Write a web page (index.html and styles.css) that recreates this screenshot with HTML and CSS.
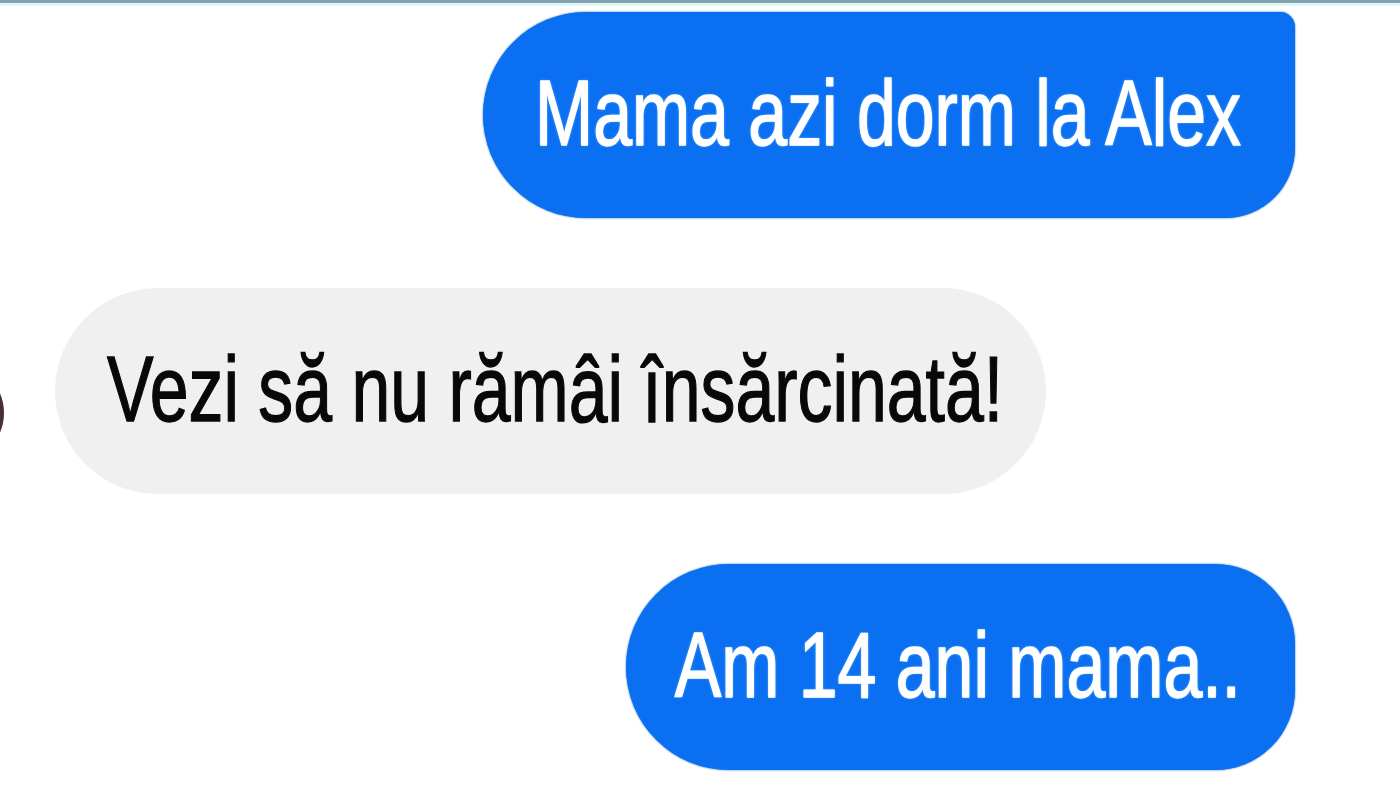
FILE: index.html
```html
<!DOCTYPE html>
<html lang="ro">
<head>
<meta charset="utf-8">
<title>Chat</title>
<link rel="stylesheet" href="styles.css">
</head>
<body>
<div class="chat">
  <div class="row row-out">
    <div class="bubble out first"><span class="txt">Mama azi dorm la Alex</span></div>
  </div>
  <div class="row row-in">
    <div class="avatar"></div>
    <div class="bubble in"><span class="txt">Vezi să nu rămâi însărcinată!</span></div>
  </div>
  <div class="row row-out">
    <div class="bubble out last"><span class="txt">Am 14 ani mama..</span></div>
  </div>
</div>
</body>
</html>
```

FILE: styles.css
```css
html, body {
  margin: 0;
  padding: 0;
  background: #ffffff;
  width: 1400px;
  height: 800px;
  overflow: hidden;
}

.chat {
  position: relative;
  height: 800px;
  box-sizing: border-box;
  border-top: 3px solid #86a0ad;
  padding: 9px 105px 0 55px;
  display: flex;
  flex-direction: column;
  gap: 70px;
  font-family: "Liberation Sans", Arial, sans-serif;
}

.chat::before {
  content: "";
  position: absolute;
  left: 0;
  right: 0;
  top: 0;
  height: 3px;
  background: #dcf7fb;
}

.row {
  display: flex;
}

.row-out {
  justify-content: flex-end;
}

.row-in {
  justify-content: flex-start;
}

.bubble {
  height: 206px;
  box-sizing: border-box;
  display: flex;
  align-items: center;
  padding: 0 54px 0 52px;
  font-size: 69.8px;
  line-height: 1;
  white-space: nowrap;
}

.txt {
  display: inline-block;
  transform: scaleY(1.32);
  transform-origin: 50% 50%;
  -webkit-text-stroke: 1px currentColor;
}

.out {
  background: #0b6ff2;
  color: #ffffff;
  text-shadow: 0 0 2px #b6f4ff;
  box-shadow: 0 0 2px #0a5fc8;
}

.out.first {
  border-radius: 103px 15px 70px 103px;
}

.out.last {
  border-radius: 103px 80px 80px 103px;
  padding-left: 49px;
}

.in {
  background: #f0f0f0;
  color: #080808;
  border-radius: 103px;
  padding-right: 43px;
}

.avatar {
  position: absolute;
  left: -96px;
  top: 360px;
  width: 100px;
  height: 100px;
  border-radius: 50%;
  background: #4a3036;
}
```
